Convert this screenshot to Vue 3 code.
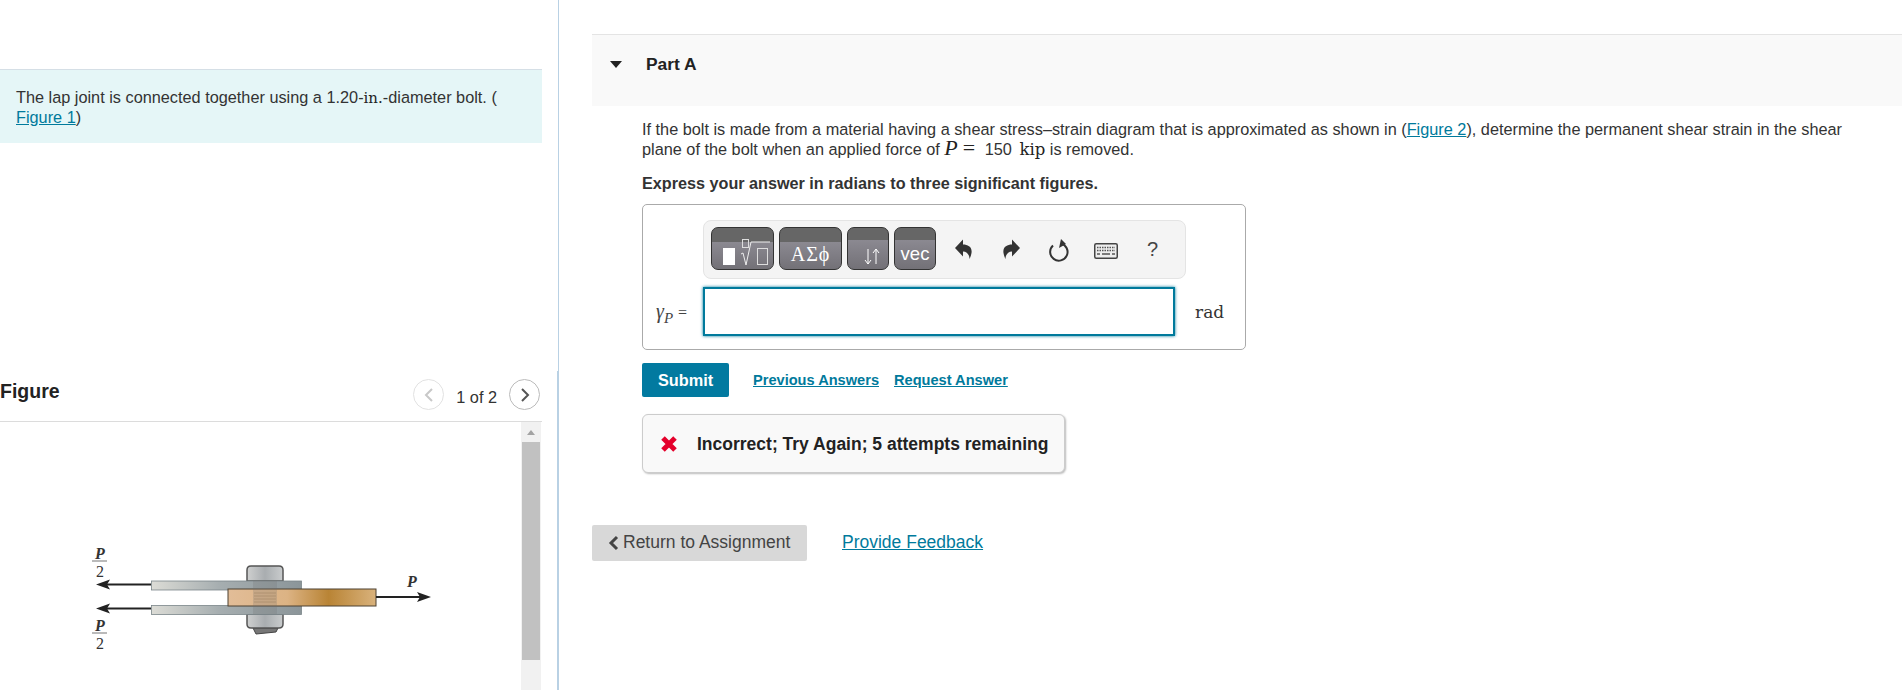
<script setup>
	const slots = ["undo", "redo", "reset", "keys", "help"];
</script>

<template>
	<div class="page">
		<aside class="left">
			<div class="intro">
				The lap joint is connected together using a 1.20-<span class="unit">in.</span>-diameter bolt. (
				<a href="#">Figure 1</a>)
			</div>

			<div class="figure-head">
				<h2>Figure</h2>
				<div class="pager">
					<button class="circle off">
						<svg width="10" height="16" viewBox="0 0 10 16"><path d="M8 2 2 8l6 6" /></svg>
					</button>
					<span>1 of 2</span>
					<button class="circle">
						<svg width="10" height="16" viewBox="0 0 10 16"><path d="m2 2 6 6-6 6" /></svg>
					</button>
				</div>
			</div>

			<div class="figure-body">
				<svg class="diagram" width="521" height="268" viewBox="0 422 521 268">
					<defs>
						<linearGradient id="steel" x1="0" x2="1" y1="0" y2="0">
							<stop offset="0" stop-color="#dcdcd6" />
							<stop offset="0.45" stop-color="#a6aeb0" />
							<stop offset="1" stop-color="#8b9599" />
						</linearGradient>
						<linearGradient id="wood" x1="0" x2="1" y1="0" y2="0">
							<stop offset="0" stop-color="#e2bd98" />
							<stop offset="0.4" stop-color="#dcb384" />
							<stop offset="0.68" stop-color="#b98435" />
							<stop offset="1" stop-color="#d9b27c" />
						</linearGradient>
						<linearGradient id="head" x1="0" x2="1" y1="0" y2="0">
							<stop offset="0" stop-color="#cfd0d0" />
							<stop offset="0.5" stop-color="#a9adb0" />
							<stop offset="1" stop-color="#c9cccd" />
						</linearGradient>
					</defs>

					<path d="M253 628h25l-2 4-20 2z" fill="#777" stroke="#444" />
					<path d="M247 581v-11q0-4 4-4h28q4 0 4 4v11z" fill="url(#head)" stroke="#555" stroke-width="1.500" />
					<path d="M247 614v10q0 4 4 4h28q4 0 4-4v-10z" fill="url(#head)" stroke="#555" stroke-width="1.500" />
					<rect x="151.500" y="581" width="150" height="9" fill="url(#steel)" stroke="#7a8589" stroke-width="0.800" />
					<rect x="151.500" y="605.500" width="150" height="9" fill="url(#steel)" stroke="#7a8589" stroke-width="0.800" />
					<rect x="228" y="589" width="148" height="17" fill="url(#wood)" stroke="#4c4030" />
					<rect x="253" y="581" width="24" height="33" fill="#6e6f6c" opacity="0.220" />
					<path d="M254 593h22M254 596h22M254 599h22M254 602h22" stroke="#a98d6d" stroke-width="0.800" />

					<g class="arrows">
						<path d="M151 584.500h-46" />
						<path d="M151 608.500h-46" />
						<path d="M376 597h44" />
					</g>
					<path d="m96 584.500 14-5-3 5 3 5z" fill="#222" />
					<path d="m96 608.500 14-5-3 5 3 5z" fill="#222" />
					<path d="m431 597-14-5 3 5-3 5z" fill="#222" />

					<g class="labels">
						<text x="100" y="559" text-anchor="middle" font-style="italic" font-weight="700">P</text>
						<rect x="92" y="560.500" width="15" height="1" fill="#777" />
						<text x="100" y="577" text-anchor="middle">2</text>
						<text x="100" y="631" text-anchor="middle" font-style="italic" font-weight="700">P</text>
						<rect x="92" y="632.500" width="15" height="1" fill="#777" />
						<text x="100" y="649" text-anchor="middle">2</text>
						<text x="412" y="587" text-anchor="middle" font-style="italic" font-weight="700">P</text>
					</g>
				</svg>
				<div class="scrollbar">
					<i class="up"></i>
					<div class="thumb"></div>
				</div>
			</div>
		</aside>

		<main class="right">
			<div class="part-bar">
				<i class="caret"></i>
				<strong>Part A</strong>
			</div>

			<div class="part-body">
				<p class="question">
					If the bolt is made from a material having a shear stress–strain diagram that is approximated as shown in (<a href="#">Figure 2</a>), determine the permanent shear strain in the shear plane of the bolt when an applied force of <span class="math"><em>P</em><span class="eq">=</span></span> 150 <span class="kip">kip</span> is removed.
				</p>
				<p class="instruction">Express your answer in radians to three significant figures.</p>

				<div class="answer">
					<div class="toolbar">
						<div class="tool wide">
							<svg width="61" height="41" viewBox="1 1 61 41">
								<rect x="12" y="21" width="12" height="17" fill="#fff" />
								<rect x="31.500" y="12.500" width="6" height="8" fill="none" stroke="#ddd" />
								<path d="m30 27 2-1 3 12 5-23h19" fill="none" stroke="#eee" />
								<rect x="46.500" y="21.500" width="10" height="16" fill="none" stroke="#ddd" />
							</svg>
						</div>
						<div class="tool wide sym">ΑΣϕ</div>
						<div class="tool narrow">
							<svg width="41" height="41" viewBox="1 1 41 41">
								<path d="M21 22v15m-3-4 3 4 3-4M29 37V22m-3 4 3-4 3 4" fill="none" stroke="#fff" />
							</svg>
						</div>
						<div class="tool narrow vec">vec</div>
						<div class="actions">
							<span v-for="s in slots" :key="s" class="slot" :class="s">
								<svg v-if="s === 'undo'" width="20" height="22" viewBox="0 0 20 22">
									<path d="M2 10 10 1.500V6.500C15 6.500 19.500 9 18.500 15 18 18 17 20 16.500 21 16.500 17 14 13.500 10 13.500V18.500Z" fill="#333" />
								</svg>
								<svg v-else-if="s === 'redo'" width="20" height="22" viewBox="0 0 20 22">
									<path d="M18 10 10 1.500V6.500C5 6.500.5 9 1.500 15 2 18 3 20 3.500 21 3.500 17 6 13.500 10 13.500V18.500Z" fill="#333" />
								</svg>
								<svg v-else-if="s === 'reset'" width="24" height="26" viewBox="0 0 24 26">
									<path d="M6 7.500A8.700 8.700 0 1 0 14 5.500" fill="none" stroke="#333" stroke-width="2" />
									<path d="m14 1 5 5-7 4z" fill="#333" />
								</svg>
								<svg v-else-if="s === 'keys'" width="24" height="16" viewBox="0 0 24 16">
									<rect x="0.750" y="0.750" width="22.500" height="14.500" rx="1.500" fill="#eee" stroke="#444" stroke-width="1.500" />
									<path d="M3 4.500h18M3 7.500h18" stroke="#555" stroke-width="1.500" stroke-dasharray="1.500 1" />
									<path d="M3 11h3m2 0h8m2 0h3" stroke="#555" stroke-width="1.500" />
								</svg>
								<template v-else>?</template>
							</span>
						</div>
					</div>

					<div class="input-row">
						<span class="var"><em>γ<sub>P</sub></em><small>=</small></span>
						<div class="input"></div>
						<span class="rad">rad</span>
					</div>
				</div>

				<div class="submit-row">
					<button class="submit">Submit</button>
					<a href="#">Previous Answers</a>
					<a href="#">Request Answer</a>
				</div>

				<div class="feedback">
					<svg width="16" height="16" viewBox="0 0 16 16">
						<path d="m2 2 12 12M14 2 2 14" stroke="#e4002b" stroke-width="5" />
					</svg>
					<span>Incorrect; Try Again; 5 attempts remaining</span>
				</div>
			</div>

			<div class="footer">
				<button class="back">
					<svg width="11" height="16" viewBox="0 0 11 16"><path d="M9 2 3 8l6 6" /></svg>
					<span>Return to Assignment</span>
				</button>
				<a href="#">Provide Feedback</a>
			</div>
		</main>
	</div>
</template>

<style>
	html,
	body {
		overflow: hidden;
		background: #fff;
	}
</style>

<style scoped>
	.page {
		display: flex;
		height: 100vh;
		overflow: hidden;
		font-family: "Liberation Sans", Arial, sans-serif;
		font-size: 16.3px;
		line-height: 20px;
		color: #333;
	}
	a {
		color: #007a9c;
		text-decoration: underline;
	}
	button {
		font-family: inherit;
		cursor: pointer;
	}

	/* Left column */
	.left {
		position: relative;
		width: 559px;
		flex: none;
		box-sizing: border-box;
		padding: 69px 16px 0 0;
		border-right: 1px solid #b9d1e4;
		display: flex;
		flex-direction: column;
	}
	.left::after {
		content: "";
		position: absolute;
		top: 371px;
		right: 0;
		bottom: 0;
		width: 1px;
		background: #b9d1e4;
	}
	.intro {
		height: 74px;
		box-sizing: border-box;
		padding: 17px 16px 0;
		background: #e5f6f7;
		border-top: 1px solid #d5dfe6;
	}
	.unit {
		font-family: "DejaVu Serif", serif;
		font-size: 15px;
		line-height: 0;
		color: #222;
	}
	.figure-head {
		margin-top: 236px;
		padding: 0 2px 11px 0;
		display: flex;
		align-items: flex-start;
		justify-content: space-between;
		border-bottom: 1px solid #dcdcdc;
	}
	.figure-head h2 {
		margin: 1px 0 0;
		font-size: 19.5px;
		line-height: 22px;
		color: #222;
	}
	.pager {
		display: flex;
		align-items: center;
		gap: 12px;
	}
	.pager span {
		padding-top: 5px;
	}
	.circle {
		width: 31px;
		height: 31px;
		padding: 0;
		display: flex;
		align-items: center;
		justify-content: center;
		background: #fff;
		border: 1px solid #bbb;
		border-radius: 50%;
	}
	.circle path {
		fill: none;
		stroke: #555;
		stroke-width: 2;
	}
	.circle.off {
		border-color: #e2e2e2;
	}
	.circle.off path {
		stroke: #c8c8c8;
	}
	.figure-body {
		flex: 1;
		display: flex;
		min-height: 0;
	}
	.diagram {
		flex: none;
		display: block;
	}
	.arrows path {
		fill: none;
		stroke: #222;
		stroke-width: 1.800;
	}
	.labels text {
		font-family: "Liberation Serif", serif;
		font-size: 16px;
		fill: #333;
	}
	.scrollbar {
		width: 20px;
		background: #f1f1f1;
		padding: 0 1px 0 1px;
		box-sizing: border-box;
	}
	.up {
		display: block;
		width: 0;
		margin: 8px auto 0;
		border: 4px solid transparent;
		border-top: 0;
		border-bottom: 5px solid #a3a3a3;
	}
	.thumb {
		margin-top: 7px;
		height: 218px;
		background: #c1c1c1;
	}

	/* Right column */
	.right {
		flex: 1;
		min-width: 0;
		padding: 34px 0 0 33px;
	}
	.part-bar {
		height: 72px;
		box-sizing: border-box;
		display: flex;
		align-items: flex-start;
		padding: 19px 0 0 18px;
		background: #f9f9f9;
		border-top: 1px solid #e4e4e4;
	}
	.part-bar strong {
		margin-left: 24px;
		font-size: 17.4px;
		color: #222;
	}
	.caret {
		width: 0;
		margin-top: 7px;
		border: 6px solid transparent;
		border-top: 7px solid #222;
		border-bottom: 0;
	}
	.part-body {
		padding: 13px 40px 0 50px;
	}
	p {
		margin: 0;
	}
	.math {
		font-family: "Liberation Serif", serif;
		font-size: 22px;
		line-height: 0;
		color: #222;
	}
	.eq {
		margin: 0 5px 0 5px;
		font-size: 22px;
	}
	.kip {
		margin-left: 3px;
		font-family: "DejaVu Serif", serif;
		font-size: 16.5px;
		line-height: 0;
		color: #222;
	}
	.instruction {
		margin-top: 14px;
		font-weight: 700;
		font-size: 16.2px;
	}
	.answer {
		margin-top: 11px;
		width: 604px;
		height: 146px;
		box-sizing: border-box;
		padding: 15px 0 0 13px;
		border: 1px solid #aaa;
		border-radius: 5px;
	}
	.toolbar {
		margin-left: 47px;
		width: 483px;
		height: 59px;
		box-sizing: border-box;
		padding: 6px 0 0 7px;
		display: flex;
		gap: 5px;
		background: #f4f4f4;
		border: 1px solid #e4e4e4;
		border-radius: 8px;
	}
	.tool {
		height: 43px;
		box-sizing: border-box;
		display: flex;
		align-items: center;
		justify-content: center;
		color: #fff;
		overflow: hidden;
		background: linear-gradient(#666 0 14px, #8b8991 14px, #737177 100%);
		border: 1px solid #333;
		border-radius: 7px;
	}
	.tool svg {
		display: block;
		flex: none;
	}
	.tool.wide {
		width: 63px;
	}
	.tool.narrow {
		width: 42px;
		background: linear-gradient(#666 0 12px, #8b8991 12px, #737177 100%);
	}
	.sym {
		padding-top: 10px;
		font-family: "Liberation Serif", serif;
		font-size: 20px;
		letter-spacing: 1px;
	}
	.vec {
		padding-top: 10px;
		font-size: 18.500px;
	}
	.actions {
		display: flex;
		padding-top: 3px;
	}
	.slot {
		width: 47px;
		height: 38px;
		box-sizing: border-box;
		display: flex;
		align-items: center;
		justify-content: center;
		font-size: 20px;
		color: #444;
	}
	.slot.undo {
		padding-right: 4px;
	}
	.slot.reset,
	.slot.keys {
		padding-top: 4px;
	}
	.input-row {
		display: flex;
		align-items: center;
		margin-top: 8px;
	}
	.var {
		width: 47px;
		font-family: "Liberation Serif", serif;
		font-size: 20px;
		color: #444;
	}
	.var sub {
		font-size: 15px;
		line-height: 0;
	}
	.var small {
		margin-left: 5px;
		font-size: 16px;
	}
	.input {
		width: 472px;
		height: 49px;
		box-sizing: border-box;
		background: #fff;
		border: 2px solid #007a9c;
		box-shadow: 0 0 3px #007a9c;
	}
	.rad {
		margin-left: 20px;
		font-family: "DejaVu Serif", serif;
		font-size: 17px;
	}
	.submit-row {
		margin-top: 13px;
		display: flex;
		align-items: center;
		gap: 15px;
		font-size: 14.600px;
		font-weight: 700;
	}
	.submit {
		width: 87px;
		height: 34px;
		margin-right: 9px;
		padding: 0;
		background: #027aa0;
		color: #fff;
		border: none;
		border-radius: 2px;
		font-size: 16.300px;
		font-weight: 700;
	}
	.feedback {
		margin-top: 17px;
		width: 423px;
		height: 59px;
		box-sizing: border-box;
		display: flex;
		align-items: center;
		gap: 20px;
		padding: 1px 0 0 18px;
		background: #f9f9f9;
		border: 1px solid #ccc;
		border-radius: 6px;
		box-shadow: 1px 1px 2px #bbb;
		font-size: 17.500px;
		font-weight: 700;
		color: #222;
		white-space: nowrap;
	}
	.footer {
		margin-top: 52px;
		display: flex;
		align-items: center;
		gap: 35px;
		font-size: 17.500px;
	}
	.footer a {
		margin-bottom: 2px;
	}
	.back {
		width: 215px;
		height: 36px;
		padding: 0 0 0 16px;
		display: flex;
		align-items: center;
		gap: 4px;
		background: #d8d8d8;
		color: #444;
		border: none;
		border-radius: 2px;
		font-size: 17.500px;
	}
	.back span {
		margin-bottom: 2px;
	}
	.back path {
		fill: none;
		stroke: #444;
		stroke-width: 3;
	}
</style>
